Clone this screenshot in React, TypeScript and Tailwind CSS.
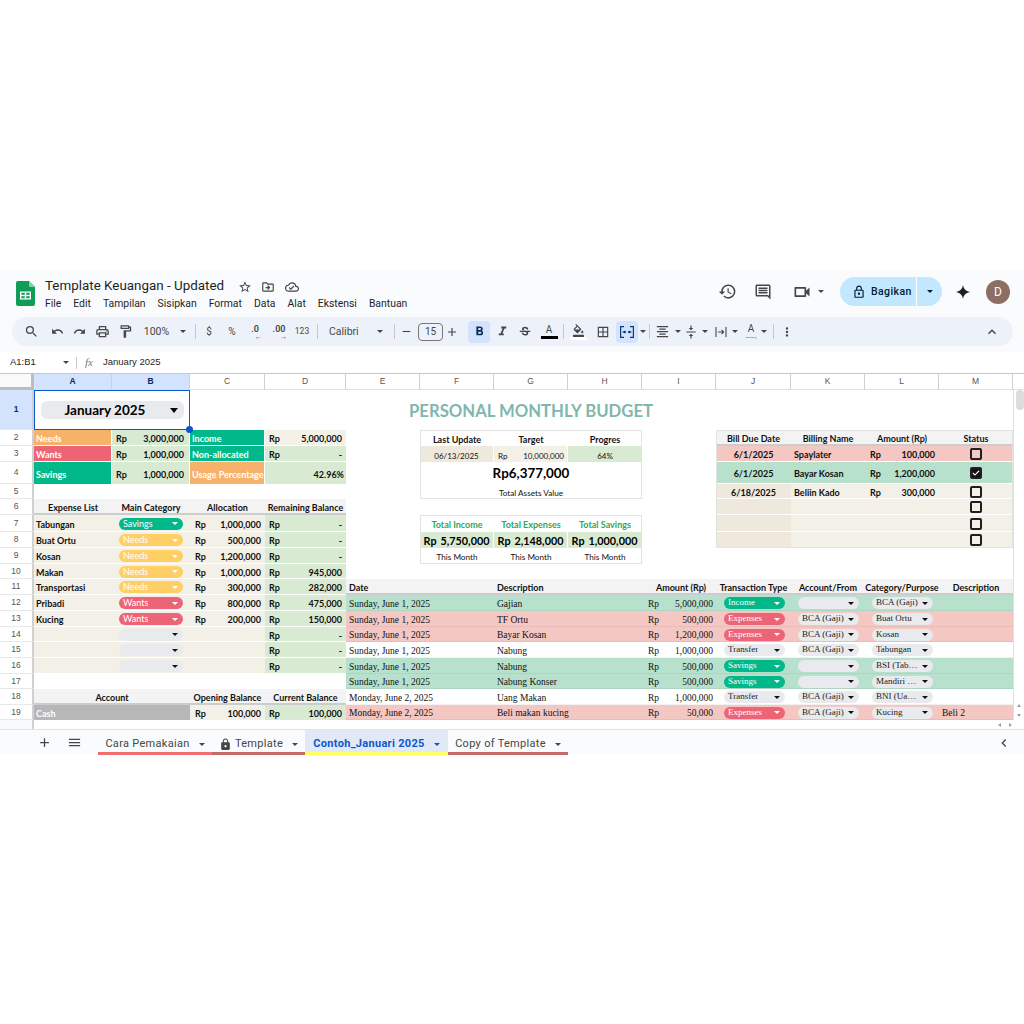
import React from "react";
import {
  MdSearch, MdUndo, MdRedo, MdOutlinePrint, MdOutlineFormatPaint, MdFormatBold, MdFormatItalic,
  MdStrikethroughS, MdFormatColorFill, MdBorderAll, MdFormatAlignCenter, MdVerticalAlignCenter,
  MdMoreVert, MdExpandLess, MdHistory, MdOutlineComment, MdOutlineVideocam, MdOutlineLock,
  MdStarBorder, MdOutlineDriveFileMove, MdOutlineCloudDone, MdAdd, MdMenu, MdLock, MdChevronLeft, MdRemove,
} from "react-icons/md";

const R: Record<number, string> = {
  1: "row-start-2", 2: "row-start-3", 3: "row-start-4", 4: "row-start-5", 5: "row-start-6", 6: "row-start-7",
  7: "row-start-8", 8: "row-start-9", 9: "row-start-10", 10: "row-start-11", 11: "row-start-12", 12: "row-start-13",
  13: "row-start-14", 14: "row-start-15", 15: "row-start-16", 16: "row-start-17", 17: "row-start-18", 18: "row-start-19", 19: "row-start-20",
};
const CL = {
  A: "col-start-2", B: "col-start-3", C: "col-start-4", D: "col-start-5", E: "col-start-6", F: "col-start-7", G: "col-start-8",
  H: "col-start-9", I: "col-start-10", J: "col-start-11", K: "col-start-12", L: "col-start-13", M: "col-start-14",
};

function Caret({ c = "border-t-[#444746]" }: { c?: string }) {
  return <span className={`block w-0 h-0 shrink-0 border-x-[3.5px] border-x-transparent border-t-[3.5px] ${c}`} />;
}

function Cell({ className = "", children }: { className?: string; children?: React.ReactNode }) {
  return <div className={`flex items-center min-w-0 overflow-hidden whitespace-nowrap pt-[3px] ${className}`}>{children}</div>;
}

function Chip({ label, tone, serif, w }: { label?: string; tone: "green" | "yellow" | "red" | "gray"; serif?: boolean; w?: string }) {
  const bg = { green: "bg-[#00b88a] text-white", yellow: "bg-[#ffcf66] text-white", red: "bg-[#ee6477] text-white", gray: "bg-[#e8eaed] text-[#222]" }[tone];
  return (
    <div className={`flex items-center justify-between h-[12px] -mt-[2px] rounded-full pl-[4px] pr-[5px] ${w ?? "w-[64px]"} ${bg} ${serif ? "font-['Liberation_Serif',serif] text-[9px]" : "text-[9px]"}`}>
      <span className="truncate">{label}</span>
      <Caret c={tone === "gray" ? "border-t-[#111]" : "border-t-white"} />
    </div>
  );
}

function Money({ v, className = "", rp = "pl-[4px]", end = "pr-[4px]" }: { v: string; className?: string; rp?: string; end?: string }) {
  return (
    <Cell className={`justify-between ${rp} ${end} ${className}`}>
      <span>Rp</span>
      <span>{v}</span>
    </Cell>
  );
}

function Tb({ w, className = "", children }: { w: string; className?: string; children?: React.ReactNode }) {
  return <div className={`flex items-center justify-center shrink-0 h-full text-[#444746] ${w} ${className}`}>{children}</div>;
}

function Divider({ className = "" }: { className?: string }) {
  return <div className={`w-px h-[15px] bg-[#c7c7c7] shrink-0 ${className}`} />;
}

function SheetsLogo() {
  return (
    <svg width="19" height="25" viewBox="0 0 19 25" className="shrink-0">
      <path d="M2 0h11l6 6v17a2 2 0 0 1-2 2H2a2 2 0 0 1-2-2V2a2 2 0 0 1 2-2z" fill="#0f9d58" />
      <path d="M13 0l6 6h-4.500A1.500 1.500 0 0 1 13 4.500z" fill="#87ceac" />
      <path d="M4 10.500h11v8H4zM5.300 11.800v2h3.500v-2zM10.200 11.800v2h3.500v-2zM5.300 15.200v2h3.500v-2zM10.200 15.200v2h3.500v-2z" fill="#fff" fillRule="evenodd" />
    </svg>
  );
}

function Check({ on }: { on?: boolean }) {
  return (
    <div className={`w-[12px] h-[12px] -mt-[2px] rounded-[2px] border-2 border-[#1f1f1f] flex items-center justify-center ${on ? "bg-[#111]" : ""}`}>
      {on && (
        <svg width="9" height="8" viewBox="0 0 9 8"><path d="M1 4l2.300 2.300L8 1.500" stroke="#fff" strokeWidth="1.300" fill="none" /></svg>
      )}
    </div>
  );
}

const leftRows: [number, string, string, "green" | "yellow" | "red", string, string][] = [
  [7, "Tabungan", "Savings", "green", "1,000,000", "-"],
  [8, "Buat Ortu", "Needs", "yellow", "500,000", "-"],
  [9, "Kosan", "Needs", "yellow", "1,200,000", "-"],
  [10, "Makan", "Needs", "yellow", "1,000,000", "945,000"],
  [11, "Transportasi", "Needs", "yellow", "300,000", "282,000"],
  [12, "Pribadi", "Wants", "red", "800,000", "475,000"],
  [13, "Kucing", "Wants", "red", "200,000", "150,000"],
];

const txRows: [number, string, string, string, string, "green" | "red" | "gray", string, string, string, string][] = [
  [12, "Sunday, June 1, 2025", "Gajian", "5,000,000", "Income", "green", "", "BCA (Gaji)", "bg-[#b7e1cd]", ""],
  [13, "Sunday, June 1, 2025", "TF Ortu", "500,000", "Expenses", "red", "BCA (Gaji)", "Buat Ortu", "bg-[#f4c7c3]", ""],
  [14, "Sunday, June 1, 2025", "Bayar Kosan", "1,200,000", "Expenses", "red", "BCA (Gaji)", "Kosan", "bg-[#f4c7c3]", ""],
  [15, "Sunday, June 1, 2025", "Nabung", "1,000,000", "Transfer", "gray", "BCA (Gaji)", "Tabungan", "bg-white", ""],
  [16, "Sunday, June 1, 2025", "Nabung", "500,000", "Savings", "green", "", "BSI (Tab…", "bg-[#b7e1cd]", ""],
  [17, "Sunday, June 1, 2025", "Nabung Konser", "500,000", "Savings", "green", "", "Mandiri …", "bg-[#b7e1cd]", ""],
  [18, "Monday, June 2, 2025", "Uang Makan", "1,000,000", "Transfer", "gray", "BCA (Gaji)", "BNI (Ua…", "bg-white", ""],
  [19, "Monday, June 2, 2025", "Beli makan kucing", "50,000", "Expenses", "red", "BCA (Gaji)", "Kucing", "bg-[#f4c7c3]", "Beli 2"],
];

const letters: [string, string, boolean][] = [
  ["A", CL.A, true], ["B", CL.B, true], ["C", CL.C, false], ["D", CL.D, false], ["E", CL.E, false], ["F", CL.F, false], ["G", CL.G, false],
  ["H", CL.H, false], ["I", CL.I, false], ["J", CL.J, false], ["K", CL.K, false], ["L", CL.L, false], ["M", CL.M, false],
];

function Sheet() {
  const hdr = "justify-center font-bold bg-[#f3f3f3] border-b-2 border-[#cccccc]";
  const beige = "bg-[#f3f0e8] border-b border-white";
  const green = "bg-[#d9ead3] border-b border-white";
  const serifText = "font-['Liberation_Serif',serif] text-[9.500px]";
  return (
    <div className="grid grid-cols-[34px_78px_78px_75px_81px_74px_74px_74px_74px_74px_75px_74px_74px_74px_11px] grid-rows-[17px_40px_16px_16px_22px_15px_16px_17px_16px_16px_15px_16px_16px_16px_15px_16px_16px_15px_16px_15px_9px] bg-white font-[Lato,sans-serif] text-[9px] text-[#111]">
      {/* column headers */}
      <div className="col-start-1 row-start-1 bg-[#f8f9fa] border-t border-[#c7c7c7] border-r-[3px] border-b-[3px] border-r-[#bdbdbd] border-b-[#bdbdbd]" />
      {letters.map(([l, c, sel]) => (
        <div key={l} className={`${c} row-start-1 flex items-center justify-center border-t border-b border-r border-t-[#c7c7c7] border-b-[#e0e0e0] border-r-[#d0d0d0] font-[Arial,'Liberation_Sans',sans-serif] text-[8.5px] ${sel ? "bg-[#d3e3fd] text-[#0b2a55] font-semibold" : "bg-white text-[#555]"}`}>
          {l}
        </div>
      ))}
      <div className="col-start-15 row-start-1 border-t border-b border-t-[#c7c7c7] border-b-[#e0e0e0]" />

      {/* row headers */}
      {Array.from({ length: 19 }, (_, i) => i + 1).map((n) => (
        <div key={n} className={`col-start-1 ${R[n]} flex items-center justify-center border-r-2 border-b border-r-[#d0d0d0] border-b-[#e8e8e8] font-['Liberation_Sans',sans-serif] text-[8.5px] ${n === 1 ? "bg-[#d3e3fd] font-bold text-[#0b2a55]" : "bg-white text-[#555]"}`}>
          {n}
        </div>
      ))}
      <div className="col-start-1 row-start-21 bg-[#f8f9fa] border-r-2 border-[#d0d0d0]" />

      {/* row 1 */}
      <div className={`${CL.A} col-end-4 row-start-2 relative flex items-center justify-center border border-[#0b57d0] z-10`}>
        <div className="flex items-center w-[143px] h-[18px] rounded-[6px] bg-[#e8eaed] pl-[24px] pr-[6px] justify-between text-[13.500px] font-bold text-black">
          <span>January 2025</span>
          <span className="block w-0 h-0 border-x-[4.500px] border-x-transparent border-t-[5px] border-t-black" />
        </div>
        <span className="absolute -right-[4px] -bottom-[4px] w-[7px] h-[7px] rounded-full bg-[#0b57d0]" />
      </div>
      <Cell className="col-start-6 col-end-11 row-start-2 justify-center text-[16.700px] font-bold text-[#7fb7ad]">PERSONAL MONTHLY BUDGET</Cell>

      {/* rows 2-4 summary */}
      <Cell className={`${CL.A} ${R[2]} bg-[#f6b26b] text-white font-bold pl-[2px] border-b border-r border-white`}>Needs</Cell>
      <Money className={`${CL.B} ${R[2]} bg-[#d9ead3] font-bold border-b border-r border-white`} v="3,000,000" end="pr-[5px]" />
      <Cell className={`${CL.C} ${R[2]} bg-[#00b88a] text-white font-bold pl-[2px] border-b border-r border-white`}>Income</Cell>
      <Money className={`${CL.D} ${R[2]} bg-[#f3f0e8] font-bold border-b border-white`} v="5,000,000" />
      <Cell className={`${CL.A} ${R[3]} bg-[#ee6477] text-white font-bold pl-[2px] border-b border-r border-white`}>Wants</Cell>
      <Money className={`${CL.B} ${R[3]} bg-[#d9ead3] font-bold border-b border-r border-white`} v="1,000,000" end="pr-[5px]" />
      <Cell className={`${CL.C} ${R[3]} bg-[#00b88a] text-white font-bold pl-[2px] border-b border-r border-white`}>Non-allocated</Cell>
      <Money className={`${CL.D} ${R[3]} bg-[#d9ead3] font-bold border-b border-white`} v="-" />
      <Cell className={`${CL.A} ${R[4]} bg-[#00b88a] text-white font-bold pl-[2px] border-r border-white`}>Savings</Cell>
      <Money className={`${CL.B} ${R[4]} bg-[#d9ead3] font-bold border-r border-white`} v="1,000,000" end="pr-[5px]" />
      <Cell className={`${CL.C} ${R[4]} bg-[#f6b26b] text-white font-bold pl-[2px] border-r border-white`}>Usage Percentage</Cell>
      <Cell className={`${CL.D} ${R[4]} bg-[#d9ead3] font-bold justify-end pr-[2px]`}>42.96%</Cell>

      {/* expense table */}
      <Cell className={`${CL.A} ${R[6]} ${hdr}`}>Expense List</Cell>
      <Cell className={`${CL.B} ${R[6]} ${hdr}`}>Main Category</Cell>
      <Cell className={`${CL.C} ${R[6]} ${hdr}`}>Allocation</Cell>
      <Cell className={`${CL.D} ${R[6]} ${hdr}`}>Remaining Balance</Cell>
      {leftRows.map(([r, name, cat, tone, alloc, rem]) => (
        <React.Fragment key={r}>
          <Cell className={`${CL.A} ${R[r]} ${beige} font-bold pl-[2px]`}>{name}</Cell>
          <Cell className={`${CL.B} ${R[r]} ${beige} pl-[7px]`}><Chip label={cat} tone={tone} /></Cell>
          <Money className={`${CL.C} ${R[r]} ${beige} font-bold`} v={alloc} rp="pl-[5px]" />
          <Money className={`${CL.D} ${R[r]} ${green} font-bold`} v={rem} />
        </React.Fragment>
      ))}
      {[14, 15, 16].map((r) => (
        <React.Fragment key={r}>
          <Cell className={`${CL.A} ${R[r]} ${beige}`} />
          <Cell className={`${CL.B} ${R[r]} ${beige} pl-[7px]`}><Chip tone="gray" /></Cell>
          <Cell className={`${CL.C} ${R[r]} ${beige}`} />
          <Money className={`${CL.D} ${R[r]} ${green} font-bold`} v="-" />
        </React.Fragment>
      ))}

      {/* accounts */}
      <Cell className={`${CL.A} col-end-4 ${R[18]} ${hdr}`}>Account</Cell>
      <Cell className={`${CL.C} ${R[18]} ${hdr}`}>Opening Balance</Cell>
      <Cell className={`${CL.D} ${R[18]} ${hdr}`}>Current Balance</Cell>
      <Cell className={`${CL.A} col-end-4 ${R[19]} bg-[#b7b7b7] text-white font-bold pl-[2px]`}>Cash</Cell>
      <Money className={`${CL.C} ${R[19]} bg-[#f3f0e8] font-bold`} v="100,000" rp="pl-[5px]" />
      <Money className={`${CL.D} ${R[19]} bg-[#d9ead3] font-bold`} v="100,000" />

      {/* assets box */}
      <Cell className={`${CL.F} ${R[2]} justify-center font-bold`}>Last Update</Cell>
      <Cell className={`${CL.G} ${R[2]} justify-center font-bold`}>Target</Cell>
      <Cell className={`${CL.H} ${R[2]} justify-center font-bold`}>Progres</Cell>
      <Cell className={`${CL.F} ${R[3]} justify-center bg-[#efe9dd] border-r border-white text-[8px]`}>06/13/2025</Cell>
      <Money className={`${CL.G} ${R[3]} bg-[#f3f0e8] border-r border-white text-[8px]`} v="10,000,000" end="pr-[3px]" />
      <Cell className={`${CL.H} ${R[3]} justify-center bg-[#d9ead3] text-[8px]`}>64%</Cell>
      <Cell className={`${CL.F} col-end-10 ${R[4]} justify-center pb-[3px] text-[13.400px] font-bold text-black`}>Rp6,377,000</Cell>
      <Cell className={`${CL.F} col-end-10 ${R[5]} justify-center text-[8.200px]`}>Total Assets Value</Cell>
      <div className={`${CL.F} col-end-10 row-start-3 row-end-7 border border-[#e3e3e3] pointer-events-none`} />

      {/* totals box */}
      {[
        [CL.F, "Total Income"],
        [CL.G, "Total Expenses"],
        [CL.H, "Total Savings"],
      ].map(([c, t]) => (
        <Cell key={t} className={`${c} ${R[7]} justify-center font-bold text-[#2ea85a]`}>{t}</Cell>
      ))}
      {[
        [CL.F, "5,750,000"],
        [CL.G, "2,148,000"],
        [CL.H, "1,000,000"],
      ].map(([c, t]) => (
        <Cell key={t + c} className={`${c} ${R[8]} justify-center gap-[4px] bg-[#d9ead3] border-r border-white font-bold text-[10.800px] text-black`}>
          <span>Rp</span><span>{t}</span>
        </Cell>
      ))}
      {[CL.F, CL.G, CL.H].map((c) => (
        <Cell key={c} className={`${c} ${R[9]} justify-center text-[8.200px]`}>This Month</Cell>
      ))}
      <div className={`${CL.F} col-end-10 row-start-8 row-end-11 border border-[#e3e3e3] pointer-events-none`} />

      {/* bills */}
      <Cell className={`${CL.J} ${R[2]} ${hdr}`}>Bill Due Date</Cell>
      <Cell className={`${CL.K} ${R[2]} ${hdr}`}>Billing Name</Cell>
      <Cell className={`${CL.L} ${R[2]} ${hdr}`}>Amount (Rp)</Cell>
      <Cell className={`${CL.M} ${R[2]} ${hdr}`}>Status</Cell>
      {(
        [
          [3, "6/1/2025", "Spaylater", "100,000", "bg-[#f4c7c3]", "bg-[#f4c7c3]", false],
          [4, "6/1/2025", "Bayar Kosan", "1,200,000", "bg-[#b7e1cd]", "bg-[#b7e1cd]", true],
          [5, "6/18/2025", "Beliin Kado", "300,000", "bg-[#efe9dd]", "bg-[#f3f0e8]", false],
          [6, "", "", "", "bg-[#efe9dd]", "bg-[#f3f0e8]", false],
          [7, "", "", "", "bg-[#efe9dd]", "bg-[#f3f0e8]", false],
          [8, "", "", "", "bg-[#efe9dd]", "bg-[#f3f0e8]", false],
        ] as [number, string, string, string, string, string, boolean][]
      ).map(([r, d, n, a, b1, b2, on]) => (
        <React.Fragment key={r}>
          <Cell className={`${CL.J} ${R[r]} ${b1} border-b border-white justify-center font-bold`}>{d}</Cell>
          <Cell className={`${CL.K} ${R[r]} ${b2} border-b border-white font-bold pl-[3px]`}>{n}</Cell>
          {a ? (
            <Money className={`${CL.L} ${R[r]} ${b2} border-b border-white font-bold`} v={a} rp="pl-[5px]" />
          ) : (
            <Cell className={`${CL.L} ${R[r]} ${b2} border-b border-white`} />
          )}
          <Cell className={`${CL.M} ${R[r]} ${b2} border-b border-white justify-center`}><Check on={on} /></Cell>
        </React.Fragment>
      ))}
      <div className={`${CL.J} col-end-15 row-start-3 row-end-10 border border-[#e3e3e3] pointer-events-none`} />

      {/* transactions */}
      <Cell className={`${CL.E} col-end-8 ${R[11]} bg-[#f3f3f3] border-b-2 border-[#cccccc] font-bold pl-[3px]`}>Date</Cell>
      <Cell className={`${CL.G} col-end-10 ${R[11]} bg-[#f3f3f3] border-b-2 border-[#cccccc] font-bold pl-[3px]`}>Description</Cell>
      <Cell className={`${CL.I} ${R[11]} ${hdr} justify-end pr-[10px] pt-[1px]`}>Amount (Rp)</Cell>
      <Cell className={`${CL.J} ${R[11]} ${hdr}`}>Transaction Type</Cell>
      <Cell className={`${CL.K} ${R[11]} ${hdr}`}>Account/From</Cell>
      <Cell className={`${CL.L} ${R[11]} ${hdr}`}>Category/Purpose</Cell>
      <Cell className={`${CL.M} ${R[11]} ${hdr}`}>Description</Cell>
      {txRows.map(([r, date, desc, amt, type, tone, acc, cat, bg, note]) => (
        <React.Fragment key={r}>
          <Cell className={`${CL.E} col-end-8 ${R[r]} ${bg} border-b border-black/5 pl-[3px] ${serifText}`}>{date}</Cell>
          <Cell className={`${CL.G} col-end-10 ${R[r]} ${bg} border-b border-black/5 pl-[3px] ${serifText}`}>{desc}</Cell>
          <Money className={`${CL.I} ${R[r]} ${bg} border-b border-black/5 ${serifText}`} v={amt} rp="pl-[6px]" end="pr-[3px]" />
          <Cell className={`${CL.J} ${R[r]} ${bg} border-b border-black/5 pl-[8px]`}><Chip label={type} tone={tone} serif w="w-[61px]" /></Cell>
          <Cell className={`${CL.K} ${R[r]} ${bg} border-b border-black/5 pl-[7px]`}><Chip label={acc} tone="gray" serif w="w-[61px]" /></Cell>
          <Cell className={`${CL.L} ${R[r]} ${bg} border-b border-black/5 pl-[7px]`}><Chip label={cat} tone="gray" serif w="w-[61px]" /></Cell>
          <Cell className={`${CL.M} ${R[r]} ${bg} border-b border-black/5 pl-[3px] ${serifText}`}>{note}</Cell>
        </React.Fragment>
      ))}

      {/* scrollbars */}
      <div className="col-start-15 row-start-2 row-end-21 flex flex-col justify-between border-l border-[#e0e0e0] bg-white">
        <div className="ml-[2px] w-[8px] h-[20px] rounded-full bg-[#dadce0]" />
        <div className="flex flex-col items-center gap-[7px] pb-[3px]">
          <span className="w-0 h-0 border-x-[2.500px] border-x-transparent border-b-[3px] border-b-[#9aa0a6]" />
          <span className="w-0 h-0 border-x-[2.500px] border-x-transparent border-t-[3px] border-t-[#9aa0a6]" />
        </div>
      </div>
      <div className="col-start-14 col-end-16 row-start-21 flex items-center justify-end gap-[8px] pr-[12px]">
        <span className="w-0 h-0 border-y-[2.500px] border-y-transparent border-r-[3px] border-r-[#9aa0a6]" />
        <span className="w-0 h-0 border-y-[2.500px] border-y-transparent border-l-[3px] border-l-[#9aa0a6]" />
      </div>
    </div>
  );
}

function Toolbar() {
  return (
    <div className="flex items-center h-[29px] ml-[12px] mr-[11px] pl-[7px] pr-[11px] rounded-full bg-[#edf2fa] text-[10.500px] text-[#444746]">
      <Tb w="w-[24px]"><MdSearch size={15} /></Tb>
      <Tb w="w-[28px]"><MdUndo size={13} /></Tb>
      <Tb w="w-[16px]"><MdRedo size={13} /></Tb>
      <Tb w="w-[30px]"><MdOutlinePrint size={15} /></Tb>
      <Tb w="w-[16px]"><MdOutlineFormatPaint size={15} /></Tb>
      <Tb w="w-[27px]" className="ml-[10px]">100%</Tb>
      <Tb w="w-[25px]"><Caret /></Tb>
      <Divider />
      <Tb w="w-[26px]" className="text-[10px]">$</Tb>
      <Tb w="w-[20px]" className="text-[10px]">%</Tb>
      <Tb w="w-[26px]" className="relative text-[9px] font-semibold pb-[4px]">.0<span className="absolute left-[13px] top-[17px] text-[7px] leading-none">←</span></Tb>
      <Tb w="w-[22px]" className="relative text-[9px] font-semibold pb-[4px]">.00<span className="absolute left-[12px] top-[17px] text-[7px] leading-none">→</span></Tb>
      <Tb w="w-[24px]" className="text-[8.500px]">123</Tb>
      <Divider className="ml-[3px]" />
      <Tb w="w-[44px]" className="ml-[11px] justify-start">Calibri</Tb>
      <Tb w="w-[14px]"><Caret /></Tb>
      <Divider className="ml-[7px]" />
      <Tb w="w-[22px]"><MdRemove size={13} /></Tb>
      <Tb w="w-[25px]" className="ml-px">
        <div className="w-[25px] h-[18px] flex items-center justify-center rounded-[4px] border border-[#747775] text-[10px]">15</div>
      </Tb>
      <Tb w="w-[18px]"><MdAdd size={14} /></Tb>
      <Tb w="w-[22px]" className="ml-[7px]">
        <div className="w-[22px] h-[22px] rounded-[4px] bg-[#d3e3fd] flex items-center justify-center text-[#0b2a55]"><MdFormatBold size={15} /></div>
      </Tb>
      <Tb w="w-[24px]"><MdFormatItalic size={15} /></Tb>
      <Tb w="w-[22px]"><MdStrikethroughS size={14} /></Tb>
      <Tb w="w-[26px]">
        <div className="flex flex-col items-center leading-none">
          <span className="text-[10px] leading-[10px]">A</span>
          <span className="block w-[17px] h-[3px] bg-black mt-[1px]" />
        </div>
      </Tb>
      <Divider className="ml-px" />
      <Tb w="w-[28px]">
        <div className="flex flex-col items-center">
          <MdFormatColorFill size={13} />
          <span className="block w-[17px] h-[3px] bg-white" />
        </div>
      </Tb>
      <Tb w="w-[22px]"><MdBorderAll size={14} /></Tb>
      <Tb w="w-[22px]" className="ml-[2px]">
        <div className="w-[22px] h-[22px] rounded-[4px] bg-[#d3e3fd] flex items-center justify-center">
          <svg width="14" height="12" viewBox="0 0 14 12" fill="none" stroke="#0b3a7a" strokeWidth="1.200">
            <path d="M4 .600H.600v10.800H4M10 .600h3.400v10.800H10" />
            <circle cx="4.700" cy="6" r="1.300" fill="#0b3a7a" stroke="none" />
            <circle cx="9.300" cy="6" r="1.300" fill="#0b3a7a" stroke="none" />
            <path d="M2.500 6h1.500M11.500 6h-1.500" strokeWidth="1" />
          </svg>
        </div>
      </Tb>
      <Tb w="w-[9px]"><Caret /></Tb>
      <Divider className="ml-[2px]" />
      <Tb w="w-[24px]"><MdFormatAlignCenter size={15} /></Tb>
      <Tb w="w-[8px]"><Caret /></Tb>
      <Tb w="w-[18px]"><MdVerticalAlignCenter size={14} /></Tb>
      <Tb w="w-[10px]"><Caret /></Tb>
      <Tb w="w-[22px]">
        <svg width="12" height="12" viewBox="0 0 12 12" fill="none" stroke="#444746" strokeWidth="1.100">
          <path d="M1 1v10M11 1v10M3 6h5.500M6.500 3.800 8.700 6 6.500 8.200" />
        </svg>
      </Tb>
      <Tb w="w-[6px]"><Caret /></Tb>
      <Tb w="w-[22px]" className="ml-[2px]">
        <div className="flex flex-col items-center leading-none">
          <span className="text-[10px] leading-[10px]">A</span>
          <span className="text-[6px] leading-[5px]">――›</span>
        </div>
      </Tb>
      <Tb w="w-[4px]"><Caret /></Tb>
      <Divider className="ml-[7px]" />
      <Tb w="w-[26px]"><MdMoreVert size={14} /></Tb>
      <div className="flex-1" />
      <Tb w="w-[20px]"><MdExpandLess size={16} /></Tb>
    </div>
  );
}

function Tab({ w, line, active, lock, label }: { w: string; line: string; active?: boolean; lock?: boolean; label: string }) {
  return (
    <div className={`relative flex items-center justify-center gap-[3px] h-full pt-[6px] ${w} border-b-[3px] ${line} ${active ? "bg-[#e1e9f7] text-[#0b57d0] font-bold" : "text-[#444746]"}`}>
      {lock && <MdLock size={13} className="text-[#444746]" />}
      <span className="tracking-[0.3px] mr-[6px]">{label}</span>
      <Caret c={active ? "border-t-[#0b57d0]" : "border-t-[#444746]"} />
    </div>
  );
}

export default function App() {
  return (
    <div className="min-h-screen bg-white pt-[270px] font-[Roboto,sans-serif]">
      <div className="bg-[#f9fbfd] h-[82px]">
        <div className="flex h-[47px] pt-[11px]">
          <div className="ml-[16px]"><SheetsLogo /></div>
          <div className="ml-[10px] -mt-[2px]">
            <div className="flex items-center h-[15px] text-[13.400px] text-[#1f1f1f]">
              <span>Template Keuangan - Updated</span>
              <MdStarBorder size={14} className="ml-[14px] text-[#444746]" />
              <MdOutlineDriveFileMove size={14} className="ml-[9px] text-[#444746]" />
              <MdOutlineCloudDone size={14} className="ml-[10px] text-[#444746]" />
            </div>
            <div className="flex gap-[12px] mt-[3px] text-[10.400px] leading-[14px] text-[#1f1f1f]">
              {["File", "Edit", "Tampilan", "Sisipkan", "Format", "Data", "Alat", "Ekstensi", "Bantuan"].map((m) => (
                <span key={m}>{m}</span>
              ))}
            </div>
          </div>
          <div className="ml-auto mr-[14px] -mt-[4px] h-[29px] flex items-center text-[#444746]">
            <MdHistory size={19} />
            <MdOutlineComment size={18} className="ml-[17px]" />
            <MdOutlineVideocam size={20} className="ml-[20px]" />
            <span className="ml-[6px]"><Caret /></span>
            <div className="ml-[16px] flex h-[29px] w-[102px] rounded-full bg-[#c2e7ff] text-[#001d35] text-[10.500px] font-medium tracking-[0.4px] overflow-hidden">
              <div className="flex items-center w-[77px] pl-[12px] gap-[5px] border-r border-white">
                <MdOutlineLock size={14} />
                <span>Bagikan</span>
              </div>
              <div className="flex-1 flex items-center justify-center"><Caret c="border-t-[#001d35]" /></div>
            </div>
            <svg width="14" height="14" viewBox="0 0 14 14" className="ml-[14px]">
              <path d="M7 0c.6 3.800 2.400 6 7 7-4.600 1-6.400 3.200-7 7-.6-3.800-2.400-6-7-7 4.600-1 6.400-3.200 7-7z" fill="#1f1f1f" />
            </svg>
            <div className="ml-[16px] w-[24px] h-[24px] rounded-full bg-[#8d6e63] flex items-center justify-center text-white text-[12px]">D</div>
          </div>
        </div>
        <Toolbar />
      </div>
      <div className="flex items-center h-[21px] bg-white text-[9.500px] text-[#1f1f1f] font-['Liberation_Sans',sans-serif]">
        <span className="ml-[10px] w-[53px]">A1:B1</span>
        <Caret />
        <span className="ml-[7px] w-px h-[12px] bg-[#c7c7c7]" />
        <span className="ml-[8px] w-[18px] font-['Liberation_Serif',serif] italic text-[11px] text-[#777]">fx</span>
        <span>January 2025</span>
      </div>
      <Sheet />
      <div className="flex items-center h-[26px] bg-[#f9fbfd] border-t border-[#e3e3e3] text-[11px] text-[#444746]">
        <MdAdd size={15} className="ml-[37px]" />
        <MdMenu size={15} className="ml-[15px]" />
        <div className="flex h-full ml-[16px]">
          <Tab w="w-[114px]" line="border-[#f26d6d]" label="Cara Pemakaian" />
          <Tab w="w-[93px]" line="border-[#c46a6a]" lock label="Template" />
          <Tab w="w-[143px]" line="border-[#ffff66]" active label="Contoh_Januari 2025" />
          <Tab w="w-[120px]" line="border-[#c46a6a]" label="Copy of Template" />
        </div>
        <MdChevronLeft size={16} className="ml-auto mr-[12px]" />
      </div>
    </div>
  );
}
